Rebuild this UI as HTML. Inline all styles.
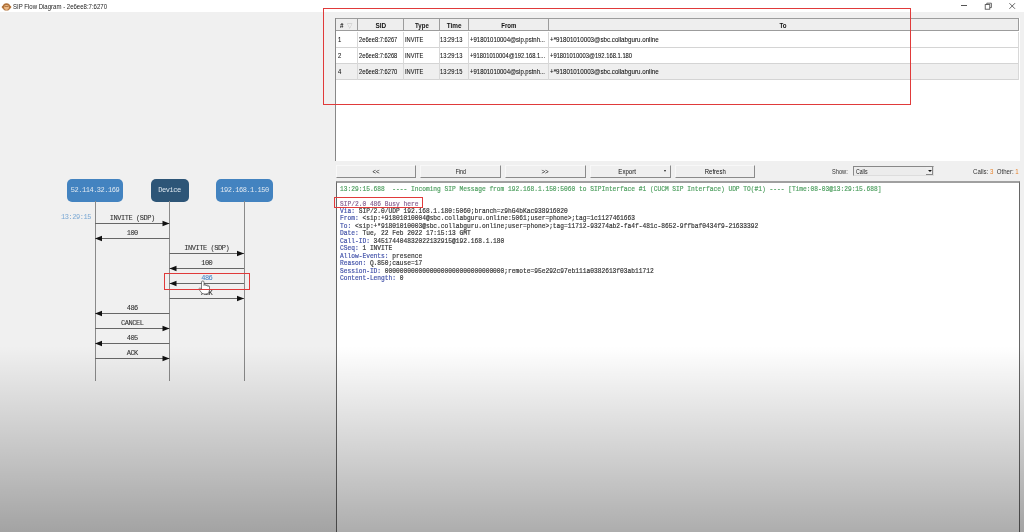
<!DOCTYPE html>
<html><head><meta charset="utf-8">
<style>
*{margin:0;padding:0;box-sizing:border-box}
html,body{width:1024px;height:532px;overflow:hidden;background:#f0f0f0;font-family:"Liberation Sans",sans-serif;position:relative}
.a{position:absolute;white-space:pre}
#title{left:0;top:0;width:1024px;height:12px;background:#fff}
#ttext{left:13.3px;top:1.5px;font-size:7px;color:#222;line-height:9px}
#tbl{left:335px;top:18px;width:685px;overflow:hidden;height:143px;background:#fff;border-left:1px solid #888}
.hdr{position:absolute;top:0;height:13px;background:#eeeeee;border:1px solid #9c9c9c;border-left:none;font-weight:bold;font-size:7px;line-height:13px;text-align:center;color:#111}
.row{position:absolute;left:0;width:683px;height:16px;border-bottom:1px solid #d4d4d4}
.cell{position:absolute;top:0;height:16px;font-size:7px;line-height:15px;color:#111;-webkit-text-stroke:0.08px #111;padding-left:2px;border-right:1px solid #d8d8d8;overflow:hidden;white-space:pre}
.btn{position:absolute;top:165px;height:13px;background:#efefef;border:1px solid #f8f8f8;border-right-color:#8a8a8a;border-bottom-color:#8a8a8a;font-size:7px;line-height:11px;text-align:center;color:#111;white-space:pre}
#txt{left:336px;top:181px;width:684px;height:360px;background:#fff;border-left:1px solid #666;border-top:2px solid #a0a0a0;border-right:1px solid #666}
.ln{position:absolute;left:2.5px;font-family:"Liberation Mono",monospace;font-size:8px;line-height:7.47px;transform:scaleX(0.7779);transform-origin:0 0;white-space:pre;color:#333;-webkit-text-stroke:0.2px currentColor}
.g{color:#4c9e5e}
.k{color:#4050a8}
.p{color:#876090}
.box{position:absolute;top:178.5px;height:23px;border-radius:5px;background:#3d85c6;color:#dfe8f0;font-family:"Liberation Mono",monospace;font-size:7px;line-height:23px;text-align:center;letter-spacing:-0.466px}
.life{position:absolute;top:201px;width:1px;height:180px;background:#8a8a8a}
.mt{position:absolute;font-family:"Liberation Mono",monospace;font-size:7px;line-height:7px;text-align:center;color:#333;white-space:pre;letter-spacing:-0.466px;-webkit-text-stroke:0.08px currentColor}
.red{position:absolute;border:1px solid #e03a3a}
#vig{left:0;top:346px;width:1024px;height:186px;background:linear-gradient(rgba(0,0,0,0) 0,rgba(0,0,0,0.1) 33%,rgba(0,0,0,0.2) 64%,rgba(0,0,0,0.32) 100%)}
</style></head><body><div id="root" style="position:absolute;left:0;top:0;width:1024px;height:532px;overflow:hidden;will-change:transform;background:#f0f0f0">
<div class="a" id="title"></div>
<svg class="a" style="left:1px;top:1.5px" width="11" height="10" viewBox="0 0 11 10"><circle cx="2.3" cy="5" r="1.6" fill="#b5783f"/><circle cx="8.7" cy="5" r="1.6" fill="#b5783f"/><circle cx="5.5" cy="4.9" r="3.7" fill="#b0723a"/><ellipse cx="5.5" cy="5.5" rx="2.5" ry="2.4" fill="#edb985"/><rect x="3.6" y="4" width="3.8" height="1" fill="#b07a48"/></svg>
<div class="a" id="ttext"><span style="display:inline-block;transform:scaleX(0.861);transform-origin:0 50%">SIP Flow Diagram - 2e6ee8:7:6270</span></div>
<div class="a" style="left:961px;top:5px;width:6px;height:1px;background:#555"></div>
<svg class="a" style="left:984px;top:2px" width="9" height="8" viewBox="0 0 9 8"><rect x="1.2" y="2.6" width="4.6" height="4.6" fill="none" stroke="#444" stroke-width="0.8"/><path d="M2.8 2.6V1.2H7.4V5.6H5.8" fill="none" stroke="#444" stroke-width="0.8"/></svg>
<svg class="a" style="left:1008px;top:2px" width="8" height="8" viewBox="0 0 8 8"><path d="M1.4 1.2L7 6.8M7 1.2L1.4 6.8" stroke="#333" stroke-width="0.75"/></svg>
<div class="a" id="tbl">
<div class="hdr" style="left:0px;width:22px;text-align:left;padding-left:4px"><span style="display:inline-block;transform:scaleX(0.9);transform-origin:0 50%">#</span><span style="position:absolute;left:11px;top:0;color:#c0c0c0;font-weight:normal;font-size:7px">&#9661;</span></div>
<div class="hdr" style="left:22px;width:46px"><span style="display:inline-block;transform:scaleX(0.917);transform-origin:50% 50%">SID</span></div>
<div class="hdr" style="left:68px;width:36px"><span style="display:inline-block;transform:scaleX(0.865);transform-origin:50% 50%">Type</span></div>
<div class="hdr" style="left:104px;width:29px"><span style="display:inline-block;transform:scaleX(0.912);transform-origin:50% 50%">Time</span></div>
<div class="hdr" style="left:133px;width:80px"><span style="display:inline-block;transform:scaleX(0.863);transform-origin:50% 50%">From</span></div>
<div class="hdr" style="left:213px;width:470px"><span style="display:inline-block;transform:scaleX(0.88);transform-origin:50% 50%">To</span></div>
<div class="row" style="top:14px;background:#fff">
<div class="cell" style="left:0px;width:22px;padding-left:2.2px"><span style="display:inline-block;transform:scaleX(0.85);transform-origin:0 50%">1</span></div>
<div class="cell" style="left:22px;width:46px;padding-left:0.8px"><span style="display:inline-block;transform:scaleX(0.82);transform-origin:0 50%">2e6ee8:7:6267</span></div>
<div class="cell" style="left:68px;width:36px;padding-left:1px"><span style="display:inline-block;transform:scaleX(0.816);transform-origin:0 50%">INVITE</span></div>
<div class="cell" style="left:104px;width:29px;padding-left:0.3px"><span style="display:inline-block;transform:scaleX(0.822);transform-origin:0 50%">13:29:13</span></div>
<div class="cell" style="left:133px;width:80px;padding-left:1px"><span style="display:inline-block;transform:scaleX(0.853);transform-origin:0 50%">+91801010004@sip.pstnh...</span></div>
<div class="cell" style="left:213px;width:470px;padding-left:0.5px"><span style="display:inline-block;transform:scaleX(0.888);transform-origin:0 50%">+*91801010003@sbc.collabguru.online</span></div>
</div>
<div class="row" style="top:30px;background:#fff">
<div class="cell" style="left:0px;width:22px;padding-left:2.2px"><span style="display:inline-block;transform:scaleX(0.85);transform-origin:0 50%">2</span></div>
<div class="cell" style="left:22px;width:46px;padding-left:0.8px"><span style="display:inline-block;transform:scaleX(0.82);transform-origin:0 50%">2e6ee8:7:6268</span></div>
<div class="cell" style="left:68px;width:36px;padding-left:1px"><span style="display:inline-block;transform:scaleX(0.816);transform-origin:0 50%">INVITE</span></div>
<div class="cell" style="left:104px;width:29px;padding-left:0.3px"><span style="display:inline-block;transform:scaleX(0.822);transform-origin:0 50%">13:29:13</span></div>
<div class="cell" style="left:133px;width:80px;padding-left:1px"><span style="display:inline-block;transform:scaleX(0.824);transform-origin:0 50%">+91801010004@192.168.1...</span></div>
<div class="cell" style="left:213px;width:470px;padding-left:0.5px"><span style="display:inline-block;transform:scaleX(0.831);transform-origin:0 50%">+91801010003@192.168.1.180</span></div>
</div>
<div class="row" style="top:46px;background:#efefef">
<div class="cell" style="left:0px;width:22px;padding-left:2.2px"><span style="display:inline-block;transform:scaleX(0.85);transform-origin:0 50%">4</span></div>
<div class="cell" style="left:22px;width:46px;padding-left:0.8px"><span style="display:inline-block;transform:scaleX(0.82);transform-origin:0 50%">2e6ee8:7:6270</span></div>
<div class="cell" style="left:68px;width:36px;padding-left:1px"><span style="display:inline-block;transform:scaleX(0.816);transform-origin:0 50%">INVITE</span></div>
<div class="cell" style="left:104px;width:29px;padding-left:0.3px"><span style="display:inline-block;transform:scaleX(0.822);transform-origin:0 50%">13:29:15</span></div>
<div class="cell" style="left:133px;width:80px;padding-left:1px"><span style="display:inline-block;transform:scaleX(0.853);transform-origin:0 50%">+91801010004@sip.pstnh...</span></div>
<div class="cell" style="left:213px;width:470px;padding-left:0.5px"><span style="display:inline-block;transform:scaleX(0.888);transform-origin:0 50%">+*91801010003@sbc.collabguru.online</span></div>
</div>
</div>
<div class="btn" style="left:336px;width:80px;"><span style="display:inline-block;transform:scaleX(0.88);transform-origin:50% 50%">&lt;&lt;</span></div>
<div class="btn" style="left:420px;width:81px;"><span style="display:inline-block;transform:scaleX(0.75);transform-origin:50% 50%">Find</span></div>
<div class="btn" style="left:505px;width:81px;"><span style="display:inline-block;transform:scaleX(0.88);transform-origin:50% 50%">&gt;&gt;</span></div>
<div class="btn" style="left:590px;width:81px;padding-right:7px;"><span style="display:inline-block;transform:scaleX(0.87);transform-origin:50% 50%">Export</span></div>
<div class="btn" style="left:675px;width:80px;"><span style="display:inline-block;transform:scaleX(0.853);transform-origin:50% 50%">Refresh</span></div>
<div class="a" style="left:664px;top:170px;width:0;height:0;border-left:1.5px solid transparent;border-right:1.5px solid transparent;border-top:2px solid #222"></div>
<div class="a" style="left:832.3px;top:166.5px;font-size:7px;line-height:9px;color:#333"><span style="display:inline-block;transform:scaleX(0.807);transform-origin:0 50%">Show:</span></div>
<div class="a" style="left:853px;top:166px;width:81px;height:10px;background:#ececec;border:1px solid #888;border-right-color:#ddd;border-bottom-color:#ddd;font-size:7px;line-height:10px;color:#222;padding-left:1.5px"><span style="display:inline-block;transform:scaleX(0.74);transform-origin:0 50%">Calls</span></div>
<div class="a" style="left:926px;top:167px;width:7px;height:8px;background:#eee;border-right:1px solid #888;border-bottom:1px solid #888"></div>
<div class="a" style="left:928px;top:170px;width:0;height:0;border-left:2px solid transparent;border-right:2px solid transparent;border-top:2.5px solid #111"></div>
<div class="a" style="left:973.3px;top:166.5px;font-size:7px;line-height:9px;color:#333"><span style="display:inline-block;transform:scaleX(0.87);transform-origin:0 50%">Calls: <span style="color:#e8822a">3</span>  Other: <span style="color:#e8822a">1</span></span></div>
<div class="a" id="txt">
<div class="ln g" style="top:1.57px">13:29:15.688  ---- Incoming SIP Message from 192.168.1.150:5060 to SIPInterface #1 (CUCM SIP Interface) UDP TO(#1) ---- [Time:08-03@13:29:15.688]</div>
<div class="ln p" style="top:16.51px">SIP/2.0 486 Busy here</div>
<div class="ln" style="top:23.98px"><span class="k">Via:</span> SIP/2.0/UDP 192.168.1.180:5060;branch=z9hG4bKac938916020</div>
<div class="ln" style="top:31.45px"><span class="k">From:</span> &lt;sip:+91801010004@sbc.collabguru.online:5061;user=phone&gt;;tag=1c1127461663</div>
<div class="ln" style="top:38.92px"><span class="k">To:</span> &lt;sip:+*91801010003@sbc.collabguru.online;user=phone&gt;;tag=11712-93274ab2-fa4f-481c-8652-9ffbaf0434f9-21633392</div>
<div class="ln" style="top:46.39px"><span class="k">Date:</span> Tue, 22 Feb 2022 17:15:13 GMT</div>
<div class="ln" style="top:53.86px"><span class="k">Call-ID:</span> 345174404832022132915@192.168.1.180</div>
<div class="ln" style="top:61.33px"><span class="k">CSeq:</span> 1 INVITE</div>
<div class="ln" style="top:68.80px"><span class="k">Allow-Events:</span> presence</div>
<div class="ln" style="top:76.27px"><span class="k">Reason:</span> Q.850;cause=17</div>
<div class="ln" style="top:83.74px"><span class="k">Session-ID:</span> 00000000000000000000000000000000;remote=95e292c97eb111a0382613f03ab11712</div>
<div class="ln" style="top:91.21px"><span class="k">Content-Length:</span> 0</div>
</div>
<div class="box" style="left:67px;width:56px;background:#4383c0">52.114.32.169</div>
<div class="box" style="left:150.5px;width:38.0px;background:#2d5577">Device</div>
<div class="box" style="left:216px;width:57px;background:#4383c0">192.168.1.150</div>
<div class="life" style="left:94.5px"></div>
<div class="life" style="left:169.0px"></div>
<div class="life" style="left:243.5px"></div>
<svg class="a" style="left:0;top:0" width="336" height="400"><line x1="95" y1="223.5" x2="169.5" y2="223.5" stroke="#666" stroke-width="1"/><path d="M169.5 223.5 L162.5 220.7 L162.5 226.3Z" fill="#111"/><line x1="95" y1="238.5" x2="169.5" y2="238.5" stroke="#666" stroke-width="1"/><path d="M95 238.5 L102 235.7 L102 241.3Z" fill="#111"/><line x1="169.5" y1="253.5" x2="244" y2="253.5" stroke="#666" stroke-width="1"/><path d="M244 253.5 L237 250.7 L237 256.3Z" fill="#111"/><line x1="169.5" y1="268.5" x2="244" y2="268.5" stroke="#666" stroke-width="1"/><path d="M169.5 268.5 L176.5 265.7 L176.5 271.3Z" fill="#111"/><line x1="169.5" y1="283.5" x2="244" y2="283.5" stroke="#666" stroke-width="1"/><path d="M169.5 283.5 L176.5 280.7 L176.5 286.3Z" fill="#111"/><line x1="169.5" y1="298.5" x2="244" y2="298.5" stroke="#666" stroke-width="1"/><path d="M244 298.5 L237 295.7 L237 301.3Z" fill="#111"/><line x1="95" y1="313.5" x2="169.5" y2="313.5" stroke="#666" stroke-width="1"/><path d="M95 313.5 L102 310.7 L102 316.3Z" fill="#111"/><line x1="95" y1="328.5" x2="169.5" y2="328.5" stroke="#666" stroke-width="1"/><path d="M169.5 328.5 L162.5 325.7 L162.5 331.3Z" fill="#111"/><line x1="95" y1="343.5" x2="169.5" y2="343.5" stroke="#666" stroke-width="1"/><path d="M95 343.5 L102 340.7 L102 346.3Z" fill="#111"/><line x1="95" y1="358.5" x2="169.5" y2="358.5" stroke="#666" stroke-width="1"/><path d="M169.5 358.5 L162.5 355.7 L162.5 361.3Z" fill="#111"/></svg>
<div class="mt" style="left:92.25px;width:80px;top:215.1px;color:#333">INVITE (SDP)</div>
<div class="mt" style="left:92.25px;width:80px;top:230.1px;color:#333">100</div>
<div class="mt" style="left:166.75px;width:80px;top:245.1px;color:#333">INVITE (SDP)</div>
<div class="mt" style="left:166.75px;width:80px;top:260.1px;color:#333">100</div>
<div class="mt" style="left:166.75px;width:80px;top:275.1px;color:#4a86c8">486</div>
<div class="mt" style="left:166.75px;width:80px;top:290.1px;color:#333">ACK</div>
<div class="mt" style="left:92.25px;width:80px;top:305.1px;color:#333">486</div>
<div class="mt" style="left:92.25px;width:80px;top:320.1px;color:#333">CANCEL</div>
<div class="mt" style="left:92.25px;width:80px;top:335.1px;color:#333">405</div>
<div class="mt" style="left:92.25px;width:80px;top:350.1px;color:#333">ACK</div>
<div class="mt" style="left:61px;top:213.9px;color:#7aa8d4;text-align:left;-webkit-text-stroke:0">13:29:15</div>
<svg class="a" style="left:198px;top:280px" width="13" height="15" viewBox="0 0 13 15"><path d="M3.5 8V2Q3.5 1 4.7 1Q6 1 6 2V5.5Q6 4.5 7 4.5Q8 4.5 8 5.5V6Q8 5 9 5Q10 5 10 6V6.5Q10 5.8 10.8 5.8Q11.5 5.8 11.5 6.8V10Q11.5 14 8 14H6Q4 14 3 12L1 9.5Q0.5 8.5 1.5 8.2Q2.5 8 3.5 9Z" fill="#fff" stroke="#333" stroke-width="0.6"/></svg>
<div class="red" style="left:323px;top:8px;width:588px;height:97px"></div>
<div class="red" style="left:333.5px;top:197px;width:89px;height:10.5px"></div>
<div class="red" style="left:164px;top:273px;width:86px;height:16.5px"></div>
<div class="a" id="vig"></div>
</div></body></html>
